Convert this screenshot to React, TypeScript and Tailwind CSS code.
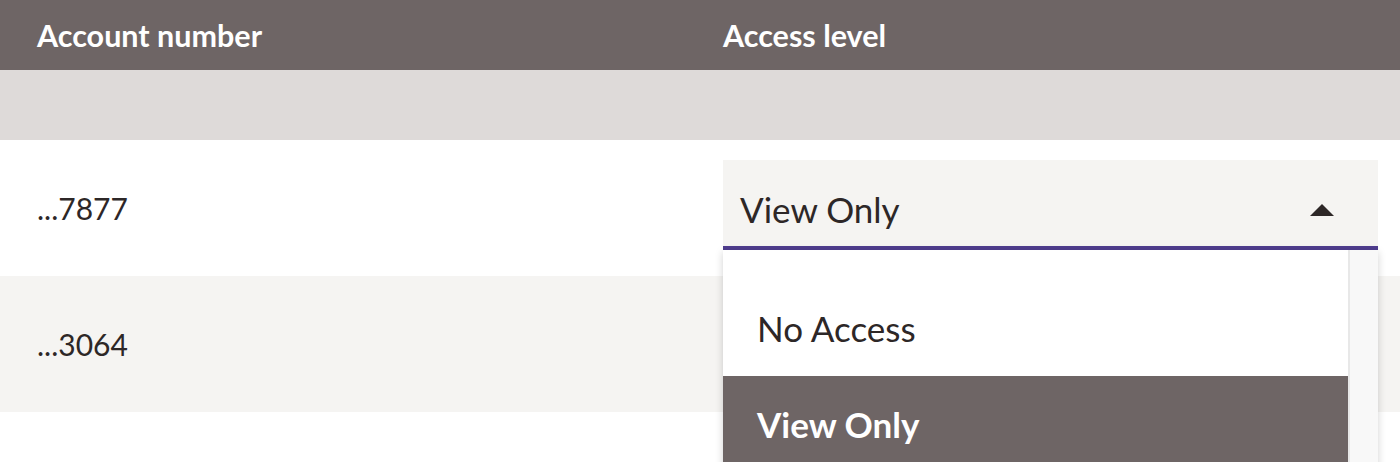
import React from "react";

const font = { fontFamily: 'Lato, "Open Sans", Arial, sans-serif' };

export default function App() {
  return (
    <div className="w-[1400px] h-[462px] overflow-hidden bg-white text-[#2d2727]" style={font}>
      <div className="grid grid-cols-[723px_1fr] h-[70px] bg-[#6e6565] text-white font-bold text-[30.5px] leading-none items-center">
        <div className="pl-[37px]">Account number</div>
        <div>Access level</div>
      </div>
      <div className="h-[70px] bg-[#dedad9]" />
      <div className="grid grid-cols-[723px_1fr] h-[136px] bg-white">
        <div className="pl-[37px] flex items-center text-[30px] leading-none">...7877</div>
        <div className="pr-[22px] pt-[20px] relative">
          <div className="relative h-[90px] bg-[#f5f4f2] border-b-4 border-[#4f3d8f] pl-[17px] pt-[32px]">
            <div className="text-[35px] leading-none">View Only</div>
            <svg width="24" height="12" viewBox="0 0 24 12" className="absolute right-[44px] top-[44px]">
              <polygon points="12,0 24,12 0,12" fill="#2d2727" />
            </svg>
          </div>
          <div className="absolute left-0 right-[22px] top-[110px] h-[260px] bg-white shadow-[0_2px_8px_rgba(0,0,0,0.18)] z-10 flex">
            <div className="flex-1 pt-[30px]">
              <div className="h-[96px] flex items-center pl-[34px] text-[35px] leading-none">No Access</div>
              <div className="h-[96px] flex items-center pl-[34px] text-[35px] leading-none font-bold bg-[#6e6565] text-white">View Only</div>
            </div>
            <div className="w-[30px] bg-[#f8f8f8] border-l-2 border-[#e8e8e8]" />
          </div>
        </div>
      </div>
      <div className="grid grid-cols-[723px_1fr] h-[136px] bg-[#f5f4f2]">
        <div className="pl-[37px] flex items-center text-[30px] leading-none">...3064</div>
        <div />
      </div>
      <div className="h-[50px] bg-white" />
    </div>
  );
}
